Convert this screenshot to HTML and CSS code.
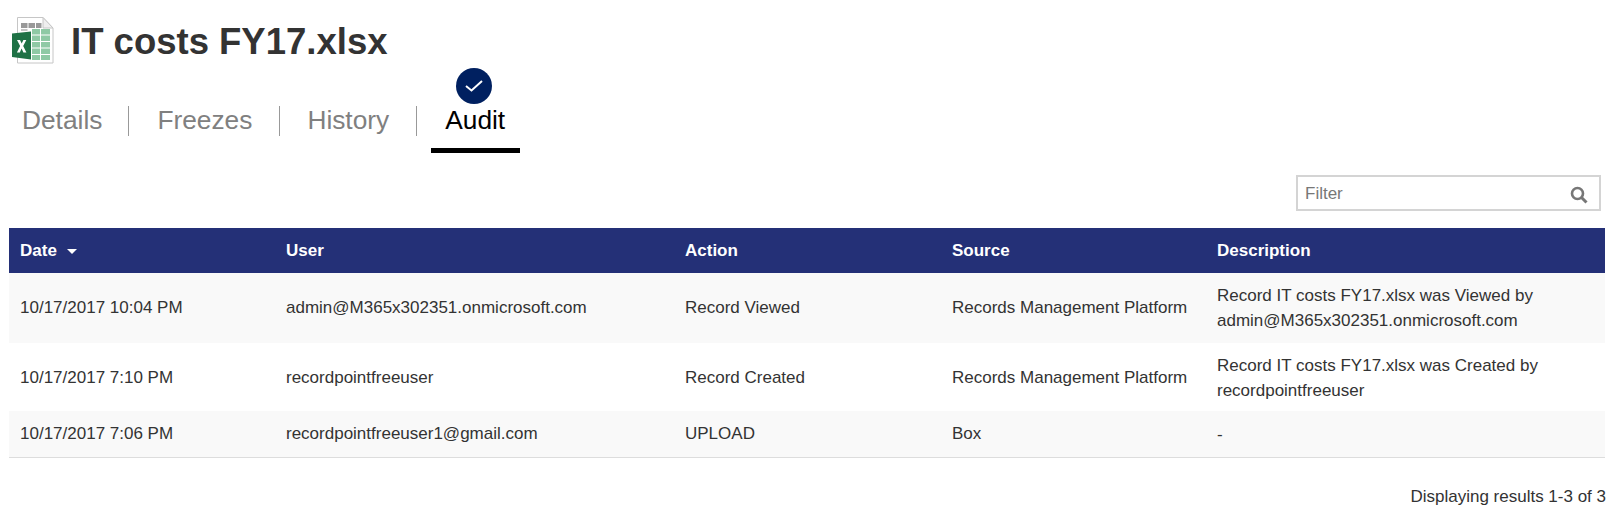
FILE: index.html
```html
<!DOCTYPE html>
<html lang="en">
<head>
<meta charset="utf-8">
<title>IT costs FY17.xlsx</title>
<link rel="stylesheet" href="styles.css">
</head>
<body>
<header class="title-row">
  <svg class="file-icon" viewBox="0 0 42 47" width="42" height="47" aria-hidden="true">
    <path d="M5.5 .5H31L41 11V46H5.5Z" fill="#fff" stroke="#c6c6c6"/>
    <path d="M31 .5V11H41Z" fill="#efefef" stroke="#c6c6c6"/>
    <g fill="#999">
      <rect x="9" y="6" width="6.5" height="5"/><rect x="16.5" y="6" width="6.5" height="5"/><rect x="24" y="6" width="5.5" height="5"/>
    </g>
    <g fill="#c4c4c4">
      <rect x="9" y="12" width="6.5" height="2"/>
    </g>
    <g fill="#8fc9a5">
      <rect x="20" y="12" width="8" height="5.5"/><rect x="29" y="12" width="9" height="5.5"/>
      <rect x="20" y="18.5" width="8" height="5.5"/><rect x="29" y="18.5" width="9" height="5.5"/>
      <rect x="20" y="25" width="8" height="5.5"/><rect x="29" y="25" width="9" height="5.5"/>
      <rect x="20" y="31.5" width="8" height="5.5"/><rect x="29" y="31.5" width="9" height="5.5"/>
      <rect x="20" y="38" width="8" height="5"/><rect x="29" y="38" width="9" height="5"/>
    </g>
    <path d="M0 16.5L19 14.5V42.5L0 40Z" fill="#1e7145"/>
    <path d="M5 23H8L9.7 26.6L11.4 23H14.3L11.2 29L14.4 35.5H11.4L9.6 31.6L7.8 35.5H4.9L8.1 29Z" fill="#fff"/>
  </svg>
  <h1 class="title">IT costs FY17.xlsx</h1>
</header>
<nav class="tabs">
  <a class="tab">Details</a>
  <a class="tab">Freezes</a>
  <a class="tab">History</a>
  <a class="tab tab-active">
    <span class="tab-badge"><svg viewBox="0 0 18 12" width="18" height="12" aria-hidden="true"><path d="M1 6L6.5 10.5L17 1" fill="none" stroke="#fff" stroke-width="2"/></svg></span>
    Audit
  </a>
</nav>
<div class="toolbar">
  <label class="filter">
    <span class="filter-label">Filter</span>
    <svg class="filter-icon" viewBox="0 0 18 18" width="18" height="18" aria-hidden="true"><circle cx="7.5" cy="7.5" r="5.5" fill="none" stroke="#777" stroke-width="2.6"/><path d="M11.5 11.5L16.5 16.5" stroke="#777" stroke-width="3"/></svg>
  </label>
</div>
<table class="audit">
  <colgroup><col class="c1"><col class="c2"><col class="c3"><col class="c4"><col class="c5"></colgroup>
  <thead>
    <tr><th>Date <span class="caret"></span></th><th>User</th><th>Action</th><th>Source</th><th>Description</th></tr>
  </thead>
  <tbody>
    <tr><td>10/17/2017 10:04 PM</td><td>admin@M365x302351.onmicrosoft.com</td><td>Record Viewed</td><td>Records Management Platform</td><td>Record IT costs FY17.xlsx was Viewed by<br>admin@M365x302351.onmicrosoft.com</td></tr>
    <tr><td>10/17/2017 7:10 PM</td><td>recordpointfreeuser</td><td>Record Created</td><td>Records Management Platform</td><td>Record IT costs FY17.xlsx was Created by<br>recordpointfreeuser</td></tr>
    <tr><td>10/17/2017 7:06 PM</td><td>recordpointfreeuser1@gmail.com</td><td>UPLOAD</td><td>Box</td><td>-</td></tr>
  </tbody>
</table>
<p class="results">Displaying results 1-3 of 3</p>
</body>
</html>
```
FILE: styles.css
```css
* { box-sizing: border-box; }
html, body { margin: 0; background: #fff; }
body { font-family: "Liberation Sans", Arial, sans-serif; color: #333; height: 523px; overflow: hidden; padding: 0 14px 0 9px; }
.title-row { display: flex; align-items: flex-start; gap: 17px; padding: 17px 0 0 3px; height: 66px; }
.file-icon { flex: none; }
.title { margin: 1px 0 0; font-size: 36.5px; font-weight: 700; line-height: 48px; color: #333; }
.tabs { display: flex; align-items: flex-start; height: 92px; padding-top: 40px; }
.tab { position: relative; font-size: 26.3px; line-height: 29px; color: #808080; padding: 0 27px; height: 30px; border-right: 1px solid #999; }
.tab:first-child { padding: 0 26px 0 13px; }
.tab:nth-child(2) { padding-left: 28px; }
.tab-active { color: #000; border-right: 0; padding: 0 15px 0 14px; margin-left: 14px; height: 47px; border-bottom: 5px solid #000; }
.tab-badge { position: absolute; left: 25px; top: -38px; width: 36px; height: 36px; border-radius: 50%; background: #002060; display: flex; align-items: center; justify-content: center; }
.toolbar { display: flex; justify-content: flex-end; padding-right: 4px; height: 70px; padding-top: 17px; }
.filter { width: 305px; height: 36px; border: 2px solid #d4d4d4; display: flex; align-items: center; justify-content: space-between; padding: 2px 11px 0 7px; }
.filter-label { font-size: 17px; color: #777; }
.filter-icon { margin-top: 2px; }
.audit { width: 1596px; border-collapse: collapse; table-layout: fixed; font-size: 17px; }
.c1 { width: 266px; } .c2 { width: 399px; } .c3 { width: 267px; } .c4 { width: 265px; } .c5 { width: 399px; }
th { background: #243077; color: #fff; text-align: left; font-weight: 700; height: 45px; padding: 0 10px 0 11px; }
td { padding: 0 10px 0 11px; line-height: 25px; height: 68px; color: #333; }
td:last-child { padding-top: 2px; }
tbody tr:nth-child(odd) td { background: #f9f9f9; }
tbody tr:first-child td { height: 70px; padding-bottom: 2px; }
tbody tr:last-child td { height: 46px; border-bottom: 1px solid #ddd; }
.caret { display: inline-block; width: 0; height: 0; border: 5px solid transparent; border-top: 5px solid #fff; border-bottom: 0; margin-left: 5px; vertical-align: 2px; }
.results { margin: 29px -1px 0 0; text-align: right; font-size: 17px; color: #333; }
```
